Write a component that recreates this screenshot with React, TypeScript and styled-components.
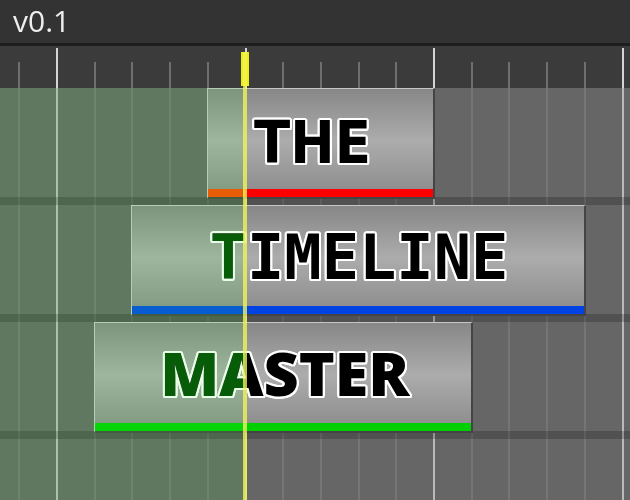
import styled, { createGlobalStyle } from 'styled-components';

const BEAT = 37.7;
const ORIGIN = 19.3;
const PLAYHEAD = 245;
const TICK_COUNT = 17;

const tickX = (i: number) => Math.round(ORIGIN + BEAT * i);

type ClipData = {
  label: string;
  start: number;
  end: number;
  color: string;
  font: string;
  size: number;
  weight: number;
  stretch: string;
  dx: number;
  dy: number;
};

const tracks: (ClipData | null)[] = [
  {
    label: 'THE',
    start: 5,
    end: 11,
    color: '#ff0000',
    font: '"DejaVu Sans Condensed", "DejaVu Sans", sans-serif',
    size: 59,
    weight: 700,
    stretch: 'condensed',
    dx: -8,
    dy: 3,
  },
  {
    label: 'TIMELINE',
    start: 3,
    end: 15,
    color: '#0042e4',
    font: '"DejaVu Sans Mono", monospace',
    size: 62,
    weight: 700,
    stretch: 'normal',
    dx: 1,
    dy: 2,
  },
  {
    label: 'MASTER',
    start: 2,
    end: 12,
    color: '#00d000',
    font: '"Open Sans", sans-serif',
    size: 61,
    weight: 800,
    stretch: 'normal',
    dx: 2,
    dy: -1,
  },
  null,
];

const ticks = Array.from({ length: TICK_COUNT }, (_, i) => ({
  x: tickX(i) - 1,
  major: i % 5 === 1,
}));

const App = () => {
  return (
    <Page>
      <GlobalStyle />
      <Header>
        <Version>v0.1</Version>
      </Header>
      <Timeline>
        <Ruler>
          {ticks.map((t, i) => (
            <Tick key={i} $major={t.major} style={{ left: t.x }} />
          ))}
          <Handle />
        </Ruler>
        <Tracks>
          {ticks.map((t, i) => (
            <GridLine key={i} $major={t.major} style={{ left: t.x }} />
          ))}
          {tracks.map((clip, i) => (
            <Track key={i}>
              {clip && (
                <Clip
                  style={{
                    left: tickX(clip.start) - 1,
                    width: tickX(clip.end) - tickX(clip.start) + 2,
                  }}
                >
                  <Label
                    $font={clip.font}
                    $size={clip.size}
                    $weight={clip.weight}
                    $stretch={clip.stretch}
                    style={{ transform: `translate(${clip.dx}px, ${clip.dy}px)` }}
                  >
                    {clip.label}
                  </Label>
                  <ColorBar $color={clip.color} />
                </Clip>
              )}
            </Track>
          ))}
          <PastWash />
          <PastLighten />
        </Tracks>
        <PlayheadLine />
      </Timeline>
    </Page>
  );
};

const GlobalStyle = createGlobalStyle`
  html, body {
    margin: 0;
    padding: 0;
    background: #333;
    overflow: hidden;
  }
`;

const Page = styled.div`
  width: 630px;
  height: 500px;
  display: flex;
  flex-direction: column;
  overflow: hidden;
`;

const Header = styled.div`
  height: 46px;
  flex-shrink: 0;
  box-sizing: border-box;
  padding-left: 13px;
  background: #333333;
  border-bottom: 3px solid #1e1e1e;
  display: flex;
  align-items: flex-start;
`;

const Version = styled.span`
  font-family: 'Open Sans', 'Noto Sans', sans-serif;
  font-size: 30px;
  line-height: normal;
  color: #eeeeee;
`;

const Timeline = styled.div`
  position: relative;
  flex: 1;
  display: flex;
  flex-direction: column;
  overflow: hidden;
`;

const Ruler = styled.div`
  position: relative;
  height: 42px;
  flex-shrink: 0;
  background: #3b3b3b;
`;

const Tick = styled.div<{ $major: boolean }>`
  position: absolute;
  bottom: 0;
  width: 2px;
  height: ${(p) => (p.$major ? '40px' : '26px')};
  background: ${(p) => (p.$major ? '#d4d4d4' : '#6e6e6e')};
`;

const Handle = styled.div`
  position: absolute;
  top: 6px;
  left: ${PLAYHEAD - 4}px;
  width: 8px;
  height: 34px;
  background: #eeee12;
  z-index: 2;
`;

const Tracks = styled.div`
  position: relative;
  flex: 1;
  display: flex;
  flex-direction: column;
  background: #666666;
`;

const GridLine = styled.div<{ $major: boolean }>`
  position: absolute;
  top: 0;
  bottom: 0;
  width: 2px;
  background: ${(p) =>
    p.$major ? 'rgba(255, 255, 255, 0.55)' : 'rgba(255, 255, 255, 0.1)'};
`;

const Track = styled.div`
  position: relative;
  height: 117px;
  flex-shrink: 0;
  box-sizing: border-box;
  border-bottom: 8px solid rgba(0, 0, 0, 0.2);
`;

const Clip = styled.div`
  position: absolute;
  top: 0;
  height: 111px;
  box-sizing: border-box;
  display: flex;
  flex-direction: column;
  border-top: 1px solid #c6c6c6;
  border-left: 1px solid #c6c6c6;
  border-right: 2px solid #444;
  border-bottom: 2px solid #444;
  background: linear-gradient(#878787 0%, #acacac 48%, #8a8a8a 100%);
`;

const Label = styled.div<{
  $font: string;
  $size: number;
  $weight: number;
  $stretch: string;
}>`
  flex: 1;
  display: flex;
  align-items: center;
  justify-content: center;
  font-family: ${(p) => p.$font};
  font-size: ${(p) => p.$size}px;
  font-weight: ${(p) => p.$weight};
  font-stretch: ${(p) => p.$stretch};
  line-height: 1;
  color: #000;
  white-space: nowrap;
  text-shadow:
    2px 0 #fff,
    -2px 0 #fff,
    0 2px #fff,
    0 -2px #fff,
    1.5px 1.5px #fff,
    -1.5px 1.5px #fff,
    1.5px -1.5px #fff,
    -1.5px -1.5px #fff,
    2px 1px #fff,
    -2px 1px #fff,
    2px -1px #fff,
    -2px -1px #fff,
    1px 2px #fff,
    -1px 2px #fff,
    1px -2px #fff,
    -1px -2px #fff;
`;

const ColorBar = styled.div<{ $color: string }>`
  height: 8px;
  flex-shrink: 0;
  background: ${(p) => p.$color};
`;

const PastWash = styled.div`
  position: absolute;
  top: 0;
  left: 0;
  bottom: 0;
  width: ${PLAYHEAD}px;
  background: rgba(60, 255, 60, 0.12);
  pointer-events: none;
  z-index: 1;
`;

const PastLighten = styled.div`
  position: absolute;
  top: 0;
  left: 0;
  bottom: 0;
  width: ${PLAYHEAD}px;
  background: rgb(0, 92, 0);
  mix-blend-mode: lighten;
  pointer-events: none;
  z-index: 1;
`;

const PlayheadLine = styled.div`
  position: absolute;
  top: 6px;
  bottom: 0;
  left: ${PLAYHEAD - 2}px;
  width: 4px;
  background: rgba(240, 244, 90, 0.8);
  z-index: 3;
`;

export default App;
